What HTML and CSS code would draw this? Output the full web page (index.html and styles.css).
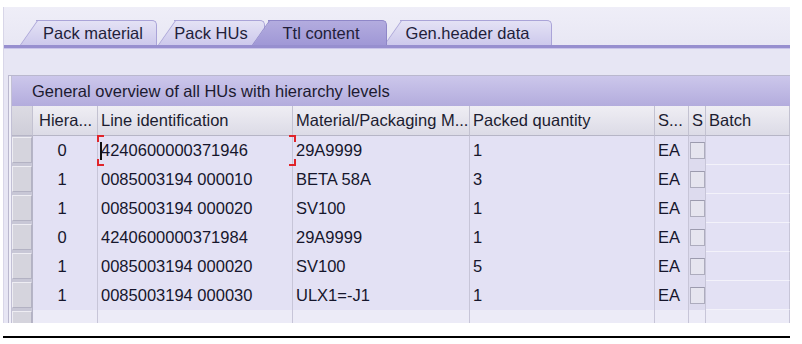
FILE: index.html
```html
<!DOCTYPE html>
<html lang="en">
<head>
    <meta charset="UTF-8">
    <title>Ttl content</title>
    <link rel="stylesheet" href="styles.css">
</head>
<body>

    <div class="screen">
        <div class="tabstrip">
            <div class="tab tab-pack">Pack material</div>
            <div class="tab tab-hus">Pack HUs</div>
            <div class="tab tab-ttl active">Ttl content</div>
            <div class="tab tab-gen">Gen.header data</div>
        </div>

        <div class="tabbody">
            <div class="panel">
                <div class="panel-inner">
                    <div class="panel-title">General overview of all HUs with hierarchy levels</div>
                    <table class="grid">
                        <colgroup>
                            <col class="c-sel">
                            <col class="c-hier">
                            <col class="c-line">
                            <col class="c-mat">
                            <col class="c-qty">
                            <col class="c-unit">
                            <col class="c-s">
                            <col class="c-batch">
                        </colgroup>
                        <thead>
                            <tr>
                                <th class="sel"></th>
                                <th class="hier-h">Hiera...</th>
                                <th>Line identification</th>
                                <th>Material/Packaging M...</th>
                                <th>Packed quantity</th>
                                <th>S...</th>
                                <th>S</th>
                                <th>Batch</th>
                            </tr>
                        </thead>
                        <tbody>
                            <tr class="row">
                                <td class="sel"><div class="rowbtn"></div></td>
                                <td class="hier">0</td>
                                <td class="focused"><div class="focus"><span class="cursor"></span>4240600000371946</div></td>
                                <td>29A9999</td>
                                <td>1</td>
                                <td>EA</td>
                                <td class="chkcell"><div class="chk"></div></td>
                                <td class="batch"></td>
                            </tr>
                            <tr class="row">
                                <td class="sel"><div class="rowbtn"></div></td>
                                <td class="hier">1</td>
                                <td>0085003194 000010</td>
                                <td>BETA 58A</td>
                                <td>3</td>
                                <td>EA</td>
                                <td class="chkcell"><div class="chk"></div></td>
                                <td class="batch"></td>
                            </tr>
                            <tr class="row">
                                <td class="sel"><div class="rowbtn"></div></td>
                                <td class="hier">1</td>
                                <td>0085003194 000020</td>
                                <td>SV100</td>
                                <td>1</td>
                                <td>EA</td>
                                <td class="chkcell"><div class="chk"></div></td>
                                <td class="batch"></td>
                            </tr>
                            <tr class="row">
                                <td class="sel"><div class="rowbtn"></div></td>
                                <td class="hier">0</td>
                                <td>4240600000371984</td>
                                <td>29A9999</td>
                                <td>1</td>
                                <td>EA</td>
                                <td class="chkcell"><div class="chk"></div></td>
                                <td class="batch"></td>
                            </tr>
                            <tr class="row">
                                <td class="sel"><div class="rowbtn"></div></td>
                                <td class="hier">1</td>
                                <td>0085003194 000020</td>
                                <td>SV100</td>
                                <td>5</td>
                                <td>EA</td>
                                <td class="chkcell"><div class="chk"></div></td>
                                <td class="batch"></td>
                            </tr>
                            <tr class="row">
                                <td class="sel"><div class="rowbtn"></div></td>
                                <td class="hier">1</td>
                                <td>0085003194 000030</td>
                                <td>ULX1=-J1</td>
                                <td>1</td>
                                <td>EA</td>
                                <td class="chkcell"><div class="chk"></div></td>
                                <td class="batch"></td>
                            </tr>
                            <tr class="row blank">
                                <td class="sel"><div class="rowbtn"></div></td>
                                <td></td>
                                <td></td>
                                <td></td>
                                <td></td>
                                <td></td>
                                <td class="chkcell"></td>
                                <td></td>
                            </tr>
                        </tbody>
                    </table>
                </div>
            </div>
        </div>
    </div>

    <div class="rule"></div>

</body>
</html>
```

FILE: styles.css
```css
body {
    margin: 0;
    background: #fff;
    font-family: "Liberation Sans", Arial, sans-serif;
    font-size: 16.5px;
    color: #16162c;
}
.screen {
    margin: 7px 0 0 3px;
    width: 787px;
    height: 316px;
    overflow: hidden;
    background: #e8e7f4;
    border-left: 1px solid #d8d6e8;
    box-sizing: border-box;
}

/* tabs */
.tabstrip {
    height: 38px;
    display: flex;
    align-items: flex-end;
    padding-left: 16px;
    background: linear-gradient(#efeef8, #e8e7f4);
}
.tab {
    position: relative;
    z-index: 1;
    height: 25px;
    box-sizing: border-box;
    margin-left: 16px;
    padding-right: 16px;
    text-align: center;
    line-height: 24px;
    white-space: nowrap;
    color: #221e3a;
    background: linear-gradient(#e4e2f5, #cdc9ec);
    border-top: 1px solid #aaa4d8;
    border-right: 1px solid #aaa4d8;
    border-top-right-radius: 5px;
}
.tab::before {
    content: '';
    position: absolute;
    z-index: -1;
    left: -16px;
    top: -1px;
    bottom: 0;
    width: 24px;
    background: linear-gradient(#e4e2f5, #cdc9ec);
    border-left: 1px solid #aaa4d8;
    border-top: 1px solid #aaa4d8;
    transform: skewX(-35deg);
    transform-origin: bottom left;
}
.tab-pack {
    width: 121px;
    padding-right: 6px;
    z-index: 4;
}
.tab-hus {
    width: 91px;
    margin-left: 17px;
    z-index: 3;
}
.tab-ttl {
    width: 119px;
    margin-left: 3px;
    padding-right: 12px;
    z-index: 5;
}
.tab-gen {
    width: 152px;
    margin-left: 13px;
    z-index: 1;
}
.tab.active,
.tab.active::before {
    background: linear-gradient(#b3acdf, #a098d6);
    border-color: #8f87c8;
}

/* tab body */
.tabbody {
    border-top: 3px solid #978fcf;
    padding: 27px 0 0 4px;
    background: linear-gradient(#cac5ea 0, #cac5ea 1px, #e7e6f4 1px);
}
.panel {
    border-top: 1px solid #bab8ce;
    border-left: 1px solid #bab8ce;
    padding: 0 0 0 2px;
    background: #f1f0f9;
}
.panel-inner {
    border-left: 1px solid #c2c0d5;
}
.panel-title {
    height: 30px;
    line-height: 30px;
    padding-left: 20px;
    white-space: nowrap;
    color: #1c1a30;
    background: linear-gradient(#ccc7eb, #b3acdd);
}

/* grid */
.grid {
    table-layout: fixed;
    width: 778px;
    border-collapse: separate;
    border-spacing: 0;
}
.c-sel { width: 21px; }
.c-hier { width: 65px; }
.c-line { width: 195px; }
.c-mat { width: 177px; }
.c-qty { width: 185px; }
.c-unit { width: 34px; }
.c-s { width: 17px; }
.c-batch { width: 84px; }

.grid th {
    height: 30px;
    box-sizing: border-box;
    padding: 0 3px;
    font-weight: normal;
    text-align: left;
    white-space: nowrap;
    overflow: hidden;
    color: #1c1c30;
    background: linear-gradient(#efeef4, #dcdbe6);
    border-right: 1px solid #c3c2d1;
    border-bottom: 1px solid #b6b5c6;
}
.grid th.hier-h {
    padding-left: 6px;
}
.grid th.sel {
    background: linear-gradient(#dcdbe3, #cfced9);
}
.grid tr.row {
    height: 29px;
}
.grid td {
    padding: 0 3px;
    white-space: nowrap;
    overflow: hidden;
    background: #e3e1f4;
    border-right: 1px solid #c7c5d8;
}
.grid td.hier {
    text-align: center;
    padding-right: 9px;
}
.grid td.sel {
    padding: 1px 0 2px 0;
    background: #c8c7d6;
    border-right: 1px solid #b5b4c6;
}
.rowbtn {
    height: 26px;
    box-sizing: border-box;
    background: #d5d4dd;
    border: 1px solid #b3b2c3;
    border-top-color: #eeedf3;
    border-left-color: #eeedf3;
}
.grid td.chkcell {
    padding: 0;
    background: #dddbee;
}
.chk {
    width: 15px;
    height: 17px;
    margin: 0 auto;
    box-sizing: border-box;
    background: #e6e5ef;
    border: 1px solid #adacbd;
    border-top-color: #9c9bae;
}
.grid td.batch {
    border-bottom: 1px solid #f3f2fa;
}
.grid tr.blank td {
    background: #ecebf7;
}
.grid tr.blank td.sel {
    background: #c8c7d6;
}

/* focused cell: red corner marks */
.grid td.focused {
    padding: 0;
    overflow: visible;
}
.focus {
    position: relative;
    height: 29px;
    line-height: 29px;
    padding-left: 3px;
}
.focus::before,
.focus::after {
    content: '';
    position: absolute;
    top: -1px;
    width: 7px;
    height: 31px;
    background-repeat: no-repeat;
}
.focus::before {
    left: -1px;
    background-image:
        linear-gradient(#e0242a, #e0242a),
        linear-gradient(#e0242a, #e0242a),
        linear-gradient(#e0242a, #e0242a),
        linear-gradient(#e0242a, #e0242a);
    background-size: 7px 2px, 2px 7px, 7px 2px, 2px 7px;
    background-position: left top, left top, left bottom, left bottom;
}
.focus::after {
    right: -4px;
    background-image:
        linear-gradient(#e0242a, #e0242a),
        linear-gradient(#e0242a, #e0242a),
        linear-gradient(#e0242a, #e0242a),
        linear-gradient(#e0242a, #e0242a);
    background-size: 7px 2px, 2px 7px, 7px 2px, 2px 7px;
    background-position: right top, right top, right bottom, right bottom;
}
.cursor {
    position: absolute;
    left: 2px;
    top: 6px;
    width: 2px;
    height: 18px;
    background: #111;
}

.rule {
    margin: 13px 0 0 3px;
    width: 787px;
    height: 2px;
    background: #000;
}
```
